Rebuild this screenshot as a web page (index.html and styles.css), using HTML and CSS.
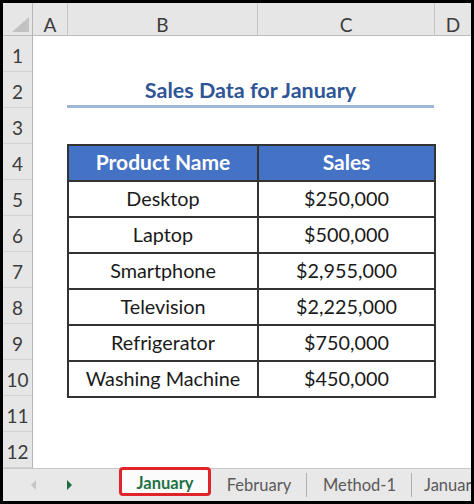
FILE: index.html
```html
<!DOCTYPE html>
<html>
<head>
<meta charset="utf-8">
<link rel="stylesheet" href="styles.css">
</head>
<body>
<div class="frame">
  <div class="colhead">
    <div class="hcell corner"><span class="tri"></span></div>
    <div class="hcell">A</div>
    <div class="hcell">B</div>
    <div class="hcell">C</div>
    <div class="hcell last">D</div>
  </div>
  <div class="sheet">
    <div class="rowheads">
      <div class="rh">1</div><div class="rh">2</div><div class="rh">3</div>
      <div class="rh">4</div><div class="rh">5</div><div class="rh">6</div>
      <div class="rh">7</div><div class="rh">8</div><div class="rh">9</div>
      <div class="rh">10</div><div class="rh">11</div><div class="rh">12</div>
    </div>
    <div class="cells">
      <div class="title">Sales Data for January</div>
      <table class="data">
        <colgroup><col class="c1"><col class="c2"></colgroup>
        <thead>
          <tr><th>Product Name</th><th>Sales</th></tr>
        </thead>
        <tbody>
          <tr><td>Desktop</td><td>$250,000</td></tr>
          <tr><td>Laptop</td><td>$500,000</td></tr>
          <tr><td>Smartphone</td><td>$2,955,000</td></tr>
          <tr><td>Television</td><td>$2,225,000</td></tr>
          <tr><td>Refrigerator</td><td>$750,000</td></tr>
          <tr><td>Washing Machine</td><td>$450,000</td></tr>
        </tbody>
      </table>
    </div>
  </div>
  <div class="tabbar">
    <div class="nav">
      <span class="arrow left"></span>
      <span class="arrow right"></span>
    </div>
    <div class="tab active">January</div>
    <div class="tab sep w96">February</div>
    <div class="tab sep w105">Method-1</div>
    <div class="tab rest">Januar</div>
  </div>
</div>
</body>
</html>
```

FILE: styles.css
```css
* { box-sizing: border-box; }
html, body { margin: 0; padding: 0; background: #000; }
body { font-family: Lato, "Open Sans", sans-serif; }

.frame {
  width: 474px;
  height: 504px;
  border: 3px solid #000;
  background: #fff;
  overflow: hidden;
  display: flex;
  flex-direction: column;
}

.colhead {
  display: grid;
  grid-template-columns: 30px 35px 190px 177px 36px;
  height: 33px;
  background: #e6e6e6;
  border-bottom: 1px solid #bdbdbd;
}
.hcell {
  position: relative;
  display: flex;
  align-items: center;
  justify-content: center;
  padding-top: 10px;
  font-size: 19px;
  line-height: 19px;
  color: #3c3c3c;
  border-right: 1px solid #c4c4c4;
}
.hcell.last { border-right: none; }
.corner { border-right: 1px solid #b5b5b5; }
.tri {
  position: absolute;
  left: 9px;
  top: 14px;
  width: 0;
  height: 0;
  border-left: 17px solid transparent;
  border-bottom: 15px solid #c2c2c2;
}

.sheet {
  display: flex;
  height: 432px;
}
.rowheads {
  width: 30px;
  background: #e6e6e6;
  border-right: 1px solid #b5b5b5;
  display: flex;
  flex-direction: column;
}
.rh {
  height: 36px;
  display: flex;
  align-items: flex-end;
  justify-content: center;
  padding-bottom: 4px;
  font-size: 19px;
  color: #3c3c3c;
  border-bottom: 1px solid #d2d2d2;
}

.cells {
  flex: 1;
  display: grid;
  grid-template-columns: 35px 190px 177px 36px;
  grid-template-rows: repeat(12, 36px);
  margin-left: -1px;
}
.title {
  grid-row: 2;
  grid-column: 2 / 4;
  display: flex;
  align-items: center;
  justify-content: center;
  font-weight: 700;
  font-size: 21.5px;
  color: #2f5597;
  border-bottom: 3px solid #9db6da;
  padding-top: 2px;
}

.data {
  grid-row: 4 / 11;
  grid-column: 2 / 4;
  width: 100%;
  height: 100%;
  border-collapse: collapse;
  table-layout: fixed;
  font-size: 19.8px;
  color: #1a1a1a;
}
.data col.c1 { width: 190px; }
.data col.c2 { width: 177px; }
.data th, .data td {
  border: 2px solid #333;
  text-align: center;
  padding: 0 0 3px 0;
  height: 36px;
}
.data th {
  background: #4472c4;
  color: #fff;
  font-weight: 700;
  font-size: 21px;
}

.tabbar {
  height: 33px;
  background: #e8e8e8;
  border-top: 1px solid #c8c8c8;
  display: flex;
  align-items: flex-start;
  font-size: 16.5px;
  color: #5a5a5a;
  white-space: nowrap;
}
.nav {
  width: 116px;
  height: 32px;
  position: relative;
}
.arrow {
  position: absolute;
  top: 11px;
  width: 0;
  height: 0;
  border-top: 5px solid transparent;
  border-bottom: 5px solid transparent;
}
.arrow.left { left: 28px; border-right: 5px solid #c6c6c6; }
.arrow.right { left: 64px; border-left: 5px solid #1e6b3d; }

.tab {
  height: 32px;
  display: flex;
  align-items: center;
  justify-content: center;
}
.tab.active {
  width: 92px;
  height: 29px;
  margin-top: -2px;
  background: #fbfbfb;
  border: 3px solid #e0242a;
  border-radius: 4px;
  color: #1e7145;
  font-weight: 700;
  padding-top: 2px;
}
.tab.sep {
  position: relative;
}
.tab.sep::after {
  content: "";
  position: absolute;
  right: 0;
  top: 4px;
  bottom: 4px;
  width: 1px;
  background: #b0b0b0;
}
.w96 { width: 96px; }
.w105 { width: 105px; }
.tab.rest {
  justify-content: flex-start;
  padding-left: 12px;
  flex: 1;
  overflow: hidden;
}
```
